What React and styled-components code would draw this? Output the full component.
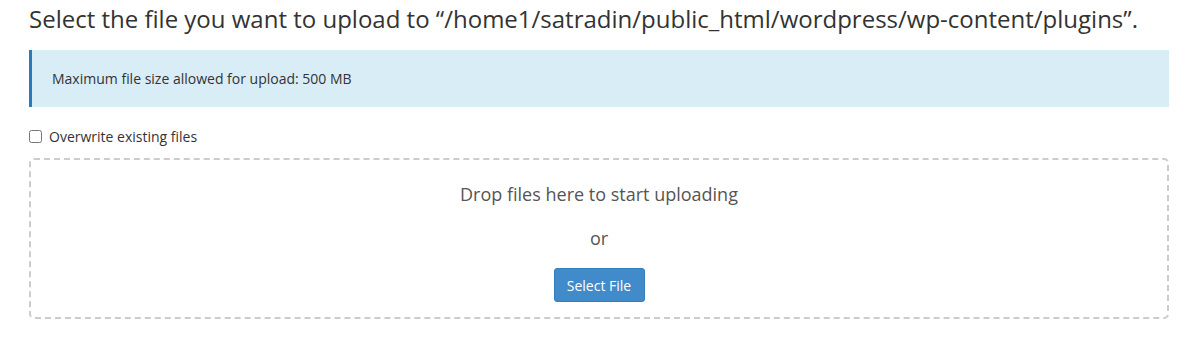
import React from "react";
import styled, { createGlobalStyle } from "styled-components";

const Global = createGlobalStyle`
  html, body { margin: 0; padding: 0; background: #fff; }
  body { font-family: "Open Sans", "Liberation Sans", sans-serif; color: #333; }
  * { box-sizing: border-box; }
`;

const Page = styled.div`
  padding: 0 17px 0 29px;
  display: flex;
  flex-direction: column;
`;

const Heading = styled.h1`
  margin: 2px 0 0;
  font-size: 24px;
  font-weight: 400;
  line-height: 33px;
  color: #333;
`;

const Alert = styled.div`
  margin-top: 15px;
  height: 57px;
  display: flex;
  align-items: center;
  padding-left: 20px;
  background: #d9edf7;
  border-left: 3px solid #2a7ab8;
  font-size: 14px;
  color: #333;
`;

const CheckRow = styled.label`
  margin-top: 20px;
  display: flex;
  align-items: center;
  gap: 7px;
  font-size: 14px;
  color: #333;
  height: 19px;
`;

const Box = styled.input`
  margin: 0;
  width: 13px;
  height: 13px;
`;

const DropZone = styled.div`
  margin-top: 12px;
  height: 161px;
  border: 2px dashed #ccc;
  border-radius: 5px;
  display: flex;
  flex-direction: column;
  align-items: center;
  padding-top: 21px;
`;

const DropText = styled.div`
  font-size: 18px;
  line-height: 26px;
  color: #555;
  margin-bottom: ${(p) => p.$gap}px;
`;

const Button = styled.button`
  font-family: inherit;
  font-size: 14px;
  color: #fff;
  background: #428bca;
  border: 1px solid #357ebd;
  border-radius: 3px;
  height: 34px;
  padding: 0 12px;
  width: 91px;
`;

export default function App() {
  return (
    <>
      <Global />
      <Page>
        <Heading>
          Select the file you want to upload to “/home1/satradin/public_html/wordpress/wp-content/plugins”.
        </Heading>
        <Alert>Maximum file size allowed for upload: 500 MB</Alert>
        <CheckRow>
          <Box type="checkbox" />
          Overwrite existing files
        </CheckRow>
        <DropZone>
          <DropText $gap={18}>Drop files here to start uploading</DropText>
          <DropText $gap={17}>or</DropText>
          <Button>Select File</Button>
        </DropZone>
      </Page>
    </>
  );
}
